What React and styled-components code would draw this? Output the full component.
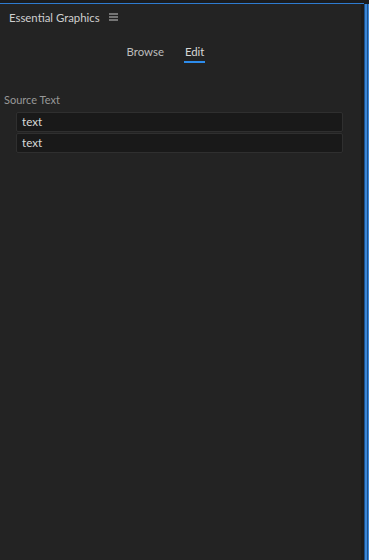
import React from "react";
import styled, { createGlobalStyle } from "styled-components";

const Global = createGlobalStyle`
  html, body { margin: 0; padding: 0; background: #1b1b1b; }
  body { width: 369px; height: 560px; overflow: hidden; }
  #root { height: 560px; }
`;

const Frame = styled.div`
  height: 560px;
  display: flex;
  flex-direction: column;
  background: #1b1c1e;
  padding-top: 3px;
  box-sizing: border-box;
`;

const TopLine = styled.div`
  height: 1px;
  background: #2e7bd0;
  margin-right: 5px;
`;

const Body = styled.div`
  flex: 1;
  display: flex;
  min-height: 0;
`;

const Panel = styled.div`
  flex: 1;
  background: #232323;
  display: flex;
  flex-direction: column;
  font-family: "Segoe UI", "Lato", "Liberation Sans", sans-serif;
`;

const Gutter = styled.div`
  width: 3px;
  background: #1c1c1c;
`;

const EdgeLine = styled.div`
  width: ${(p) => p.$w}px;
  background: ${(p) => p.$c};
`;

const Header = styled.div`
  height: 26px;
  display: flex;
  align-items: center;
  padding-left: 9px;
  gap: 9px;
  color: #cfcfcf;
  font-size: 11.4px;
`;

const Tabs = styled.div`
  display: flex;
  justify-content: center;
  gap: 19px;
  margin-top: 13px;
  padding-right: 30px;
`;

const Tab = styled.div`
  font-size: 11.4px;
  color: ${(p) => (p.$active ? "#d6d6d6" : "#bdbdbd")};
  padding: 2px 1px 3px;
  border-bottom: 2px solid ${(p) => (p.$active ? "#2d8ceb" : "transparent")};
`;

const Section = styled.div`
  margin-top: 28px;
  display: flex;
  flex-direction: column;
`;

const Label = styled.div`
  font-size: 11px;
  color: #989898;
  padding-left: 4px;
  height: 17px;
  line-height: 17px;
`;

const Fields = styled.div`
  display: flex;
  flex-direction: column;
  gap: 1px;
  margin: 4px 18px 0 16px;
`;

const Field = styled.div`
  height: 18px;
  background: #191919;
  border: 1px solid #2f2f2f;
  border-radius: 2px;
  color: #d8d8d8;
  font-size: 11.6px;
  line-height: 18px;
  padding-left: 5px;
`;

export default function App() {
  return (
    <>
      <Global />
      <Frame>
        <TopLine />
        <Body>
          <Panel>
            <Header>
              <span>Essential Graphics</span>
              <svg width="9" height="8" viewBox="0 0 9 8">
                <rect x="0" y="0.5" width="9" height="1" fill="#c8c8c8" />
                <rect x="0" y="3.5" width="9" height="1" fill="#c8c8c8" />
                <rect x="0" y="6.5" width="9" height="1" fill="#c8c8c8" />
              </svg>
            </Header>
            <Tabs>
              <Tab>Browse</Tab>
              <Tab $active>Edit</Tab>
            </Tabs>
            <Section>
              <Label>Source Text</Label>
              <Fields>
                <Field>text</Field>
                <Field>text</Field>
              </Fields>
            </Section>
          </Panel>
          <Gutter />
          <EdgeLine $w={1} $c="#1d4f88" />
          <EdgeLine $w={2} $c="#3a86d6" />
          <EdgeLine $w={1} $c="#1d4f88" />
          <EdgeLine $w={1} $c="#3a86d6" />
        </Body>
      </Frame>
    </>
  );
}
